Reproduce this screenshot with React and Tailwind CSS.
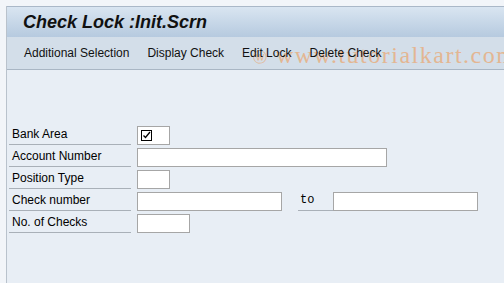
import React from 'react'

const font = { fontFamily: '"Liberation Sans", Arial, sans-serif' }

function Row({ label, children }) {
  return (
    <div className="flex items-center h-[22px]">
      <div className="w-[122px] h-[20px] flex items-end border-b border-[#a9b0b8] pl-[3px] pb-[1px] text-[12px] text-[#000]">
        {label}
      </div>
      <div className="ml-[6px] flex items-center">{children}</div>
    </div>
  )
}

function Field({ w }) {
  return <div className={`${w} h-[19px] bg-white border border-[#a6a6a6]`} />
}

export default function App() {
  return (
    <div className="w-[504px] h-[283px] bg-[#f2f5f9] pt-[6px] overflow-hidden" style={font}>
      <div className="ml-[6px] h-[277px] border-l border-[#b9c2cc] bg-[#e8eef5] flex flex-col">
        <div className="h-[31px] border-t border-[#aab8c8] bg-gradient-to-b from-[#d9e5f1] to-[#b6cadf] flex items-center pl-[16px]">
          <span className="text-[18px] font-bold italic text-[#111]">Check Lock :Init.Scrn</span>
        </div>
        <div className="relative h-[33px] bg-[#d3dee9] border-b border-[#a9b6c4] flex items-center pl-[17px] gap-[18px] text-[12px] text-[#111] overflow-hidden">
          <span
            className="absolute left-[246px] top-[0px] text-[24px] tracking-[1.5px] text-[#eba66e] opacity-70 pointer-events-none whitespace-nowrap"
            style={{ fontFamily: '"Liberation Serif", serif' }}
          >
            <span className="text-[14px] align-middle">ⓦ</span> www.tutorialkart.com
          </span>
          <span className="relative">Additional Selection</span>
          <span className="relative">Display Check</span>
          <span className="relative">Edit Lock</span>
          <span className="relative">Delete Check</span>
        </div>
        <div className="pt-[54px] pl-[2px] flex flex-col">
          <Row label="Bank Area">
            <div className="w-[33px] h-[19px] bg-white border border-[#a6a6a6] flex items-center pl-[3px]">
              <svg width="11" height="11" viewBox="0 0 11 11">
                <rect x="0.5" y="0.5" width="10" height="10" fill="none" stroke="#000" />
                <path d="M2.5 5.5 L4.5 7.5 L9 2" fill="none" stroke="#000" strokeWidth="1.3" />
              </svg>
            </div>
          </Row>
          <Row label="Account Number">
            <Field w="w-[250px]" />
          </Row>
          <Row label="Position Type">
            <Field w="w-[33px]" />
          </Row>
          <Row label="Check number">
            <Field w="w-[145px]" />
            <div
              className="ml-[16px] w-[35px] h-[20px] border-b border-[#a9b0b8] flex items-end pl-[2px] pb-[1px] text-[12px]"
              style={{ fontFamily: '"Liberation Mono", monospace' }}
            >
              to
            </div>
            <Field w="w-[145px]" />
          </Row>
          <Row label="No. of Checks">
            <Field w="w-[53px]" />
          </Row>
        </div>
      </div>
    </div>
  )
}
